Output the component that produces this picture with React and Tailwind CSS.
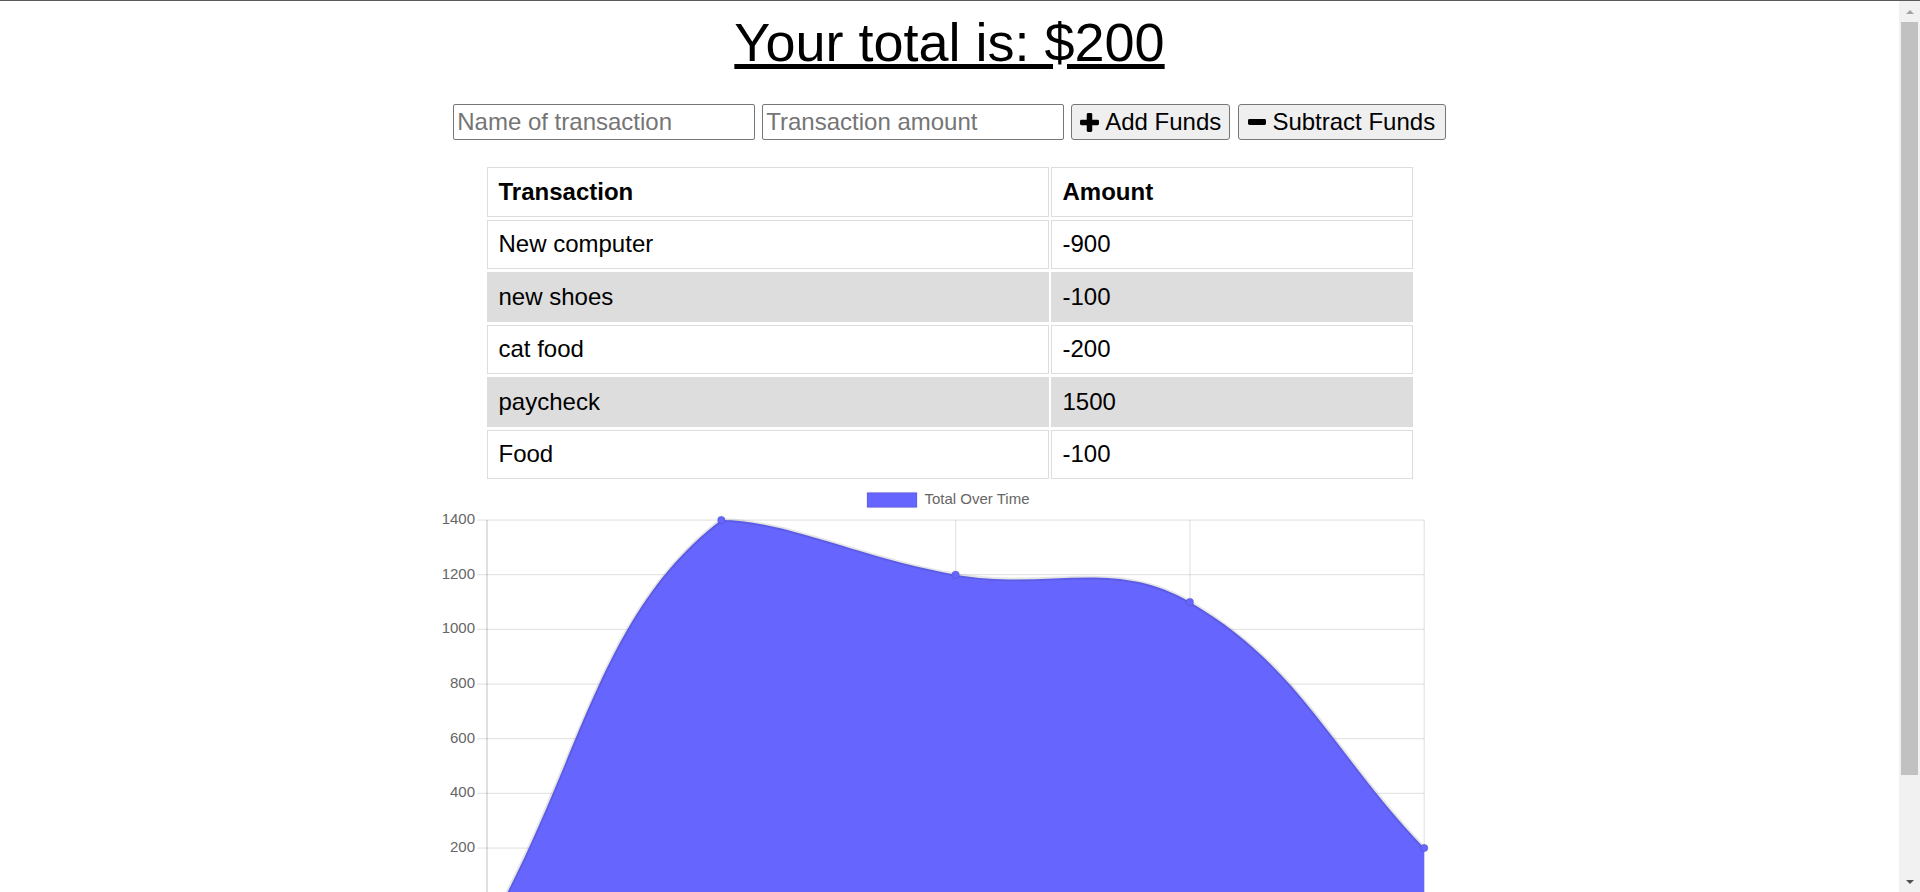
import React from 'react';

const transactions = [
    { name: 'New computer', amount: '-900' },
    { name: 'new shoes', amount: '-100' },
    { name: 'cat food', amount: '-200' },
    { name: 'paycheck', amount: '1500' },
    { name: 'Food', amount: '-100' },
];

// chart geometry in page pixels
const xs = [487, 721.3, 955.6, 1189.9, 1424.2];
const values = [-100, 1400, 1200, 1100, 200];
const yOf = (v) => 902.7 - v * 0.27335;
const area = { left: 487, right: 1424.2, top: yOf(1400), bottom: yOf(-200) };
const gridTicks = [1400, 1200, 1000, 800, 600, 400, 200, 0, -200];
const labelTicks = [1400, 1200, 1000, 800, 600, 400, 200];

// same spline as chart.js v2 (tension 0.4, control points capped to the chart area)
const buildCurve = (pts, t) => {
    const cap = (q) => ({
        x: Math.min(Math.max(q.x, area.left), area.right),
        y: Math.min(Math.max(q.y, area.top), area.bottom),
    });
    const cps = pts.map((p, i) => {
        const prev = pts[i - 1] || p;
        const next = pts[i + 1] || p;
        const d01 = Math.hypot(p.x - prev.x, p.y - prev.y);
        const d12 = Math.hypot(next.x - p.x, next.y - p.y);
        let s01 = d01 / (d01 + d12);
        let s12 = d12 / (d01 + d12);
        if (isNaN(s01)) s01 = 0;
        if (isNaN(s12)) s12 = 0;
        const fa = t * s01;
        const fb = t * s12;
        return {
            prev: cap({ x: p.x - fa * (next.x - prev.x), y: p.y - fa * (next.y - prev.y) }),
            next: cap({ x: p.x + fb * (next.x - prev.x), y: p.y + fb * (next.y - prev.y) }),
        };
    });
    let d = `M ${pts[0].x} ${pts[0].y}`;
    for (let i = 1; i < pts.length; i++) {
        const a = cps[i - 1].next;
        const b = cps[i].prev;
        d += ` C ${a.x} ${a.y}, ${b.x} ${b.y}, ${pts[i].x} ${pts[i].y}`;
    }
    return d;
};

const points = xs.map((x, i) => ({ x, y: yOf(values[i]) }));
const curve = buildCurve(points, 0.4);
const fillPath = `${curve} L ${xs[4]} ${yOf(0)} L ${xs[0]} ${yOf(0)} Z`;

const PlusIcon = () => (
    <svg width="19" height="19" viewBox="0 0 19 19" className="shrink-0">
        <rect x="6.75" y="0" width="5.5" height="19" rx="1.4" fill="#000" />
        <rect x="0" y="6.75" width="19" height="5.5" rx="1.4" fill="#000" />
    </svg>
);

const MinusIcon = () => (
    <svg width="18" height="6" viewBox="0 0 18 6" className="shrink-0">
        <rect x="0" y="0" width="18" height="6" rx="1.4" fill="#000" />
    </svg>
);

const Chart = () => (
    <svg width="1899" height="420" viewBox="0 0 1899 420" className="block shrink-0">
        <g transform="translate(0,-482)" fontFamily="'Liberation Sans', Arial, sans-serif">
            {/* Legend */}
            <rect x="867" y="492.5" width="50" height="15" fill="#6666ff" stroke="rgba(0,0,0,0.1)" strokeWidth="1.25" />
            <text x="924.5" y="500.5" fontSize="15" fill="#666" dominantBaseline="middle">Total Over Time</text>

            {/* Grid */}
            {gridTicks.map((v) => (
                <line key={v} x1="477" x2={area.right} y1={yOf(v)} y2={yOf(v)} stroke="rgba(0,0,0,0.1)" strokeWidth="1.25" />
            ))}
            {xs.map((x) => (
                <line key={x} x1={x} x2={x} y1={area.top} y2="1000" stroke="rgba(0,0,0,0.1)" strokeWidth="1.25" />
            ))}
            <line x1="487" x2="487" y1={area.top} y2="1000" stroke="rgba(0,0,0,0.1)" strokeWidth="1.25" />

            {/* Y labels */}
            {labelTicks.map((v) => (
                <text key={v} x="475" y={yOf(v)} fontSize="15" fill="#666" textAnchor="end" dominantBaseline="middle">
                    {v}
                </text>
            ))}

            {/* Data */}
            <path d={fillPath} fill="#6666ff" />
            <path d={curve} fill="none" stroke="rgba(0,0,0,0.1)" strokeWidth="3.75" />
            {points.map((p) => (
                <circle key={p.x} cx={p.x} cy={p.y} r="3.75" fill="#6666ff" stroke="rgba(0,0,0,0.1)" strokeWidth="1.25" />
            ))}
        </g>
    </svg>
);

const App = () => {
    return (
        <div className="w-[1920px] h-[892px] overflow-hidden bg-white border-t border-[#5a5a5a] flex font-['Liberation_Sans',Arial,sans-serif] text-black">
            {/* Page */}
            <div className="w-[1899px] flex flex-col items-center overflow-hidden">
                <h1 className="mt-[10px] text-[54px] leading-[62px] font-normal underline text-center">
                    Your total is: $200
                </h1>

                <div className="mt-[31px] flex items-center gap-[7.5px]">
                    <input
                        type="text"
                        placeholder="Name of transaction"
                        className="w-[301.5px] h-[36px] px-[3px] text-[24px] border border-[#767676] rounded-[2px] bg-white placeholder:text-[#757575] outline-none"
                    />
                    <input
                        type="number"
                        placeholder="Transaction amount"
                        className="w-[301.5px] h-[36px] px-[3px] text-[24px] border border-[#767676] rounded-[2px] bg-white placeholder:text-[#757575] outline-none"
                    />
                    <button className="w-[159px] h-[36px] flex items-center justify-center gap-[6px] text-[24px] bg-[#efefef] border border-[#767676] rounded-[3px]">
                        <PlusIcon />
                        <span>Add Funds</span>
                    </button>
                    <button className="w-[208px] h-[36px] flex items-center justify-center gap-[6px] text-[24px] bg-[#efefef] border border-[#767676] rounded-[3px]">
                        <MinusIcon />
                        <span>Subtract Funds</span>
                    </button>
                </div>

                <table className="mt-[24px] w-[930px] table-fixed border-separate border-spacing-x-[2.5px] border-spacing-y-[3px] text-[24px] shrink-0">
                    <thead>
                        <tr>
                            <th className="w-[562px] h-[49.5px] p-0 pl-[11px] text-left font-bold border border-[#dddddd]">Transaction</th>
                            <th className="h-[49.5px] p-0 pl-[11px] text-left font-bold border border-[#dddddd]">Amount</th>
                        </tr>
                    </thead>
                    <tbody>
                        {transactions.map((t, i) => (
                            <tr key={t.name} className={i % 2 === 1 ? 'bg-[#dddddd]' : ''}>
                                <td className="h-[49.5px] p-0 pl-[11px] border border-[#dddddd]">{t.name}</td>
                                <td className="h-[49.5px] p-0 pl-[11px] border border-[#dddddd]">{t.amount}</td>
                            </tr>
                        ))}
                    </tbody>
                </table>

                <Chart />
            </div>

            {/* Scrollbar */}
            <div className="w-[21px] h-full bg-[#f1f1f1] flex flex-col items-center">
                <div className="mt-[9px] w-0 h-0 border-x-[4.5px] border-x-transparent border-b-[4.5px] border-b-[#a3a3a3]" />
                <div className="mt-[8px] w-[17px] h-[753px] bg-[#c1c1c1]" />
                <div className="mt-auto mb-[8px] w-0 h-0 border-x-[4.5px] border-x-transparent border-t-[4.5px] border-t-[#505050]" />
            </div>
        </div>
    );
};

export default App;
